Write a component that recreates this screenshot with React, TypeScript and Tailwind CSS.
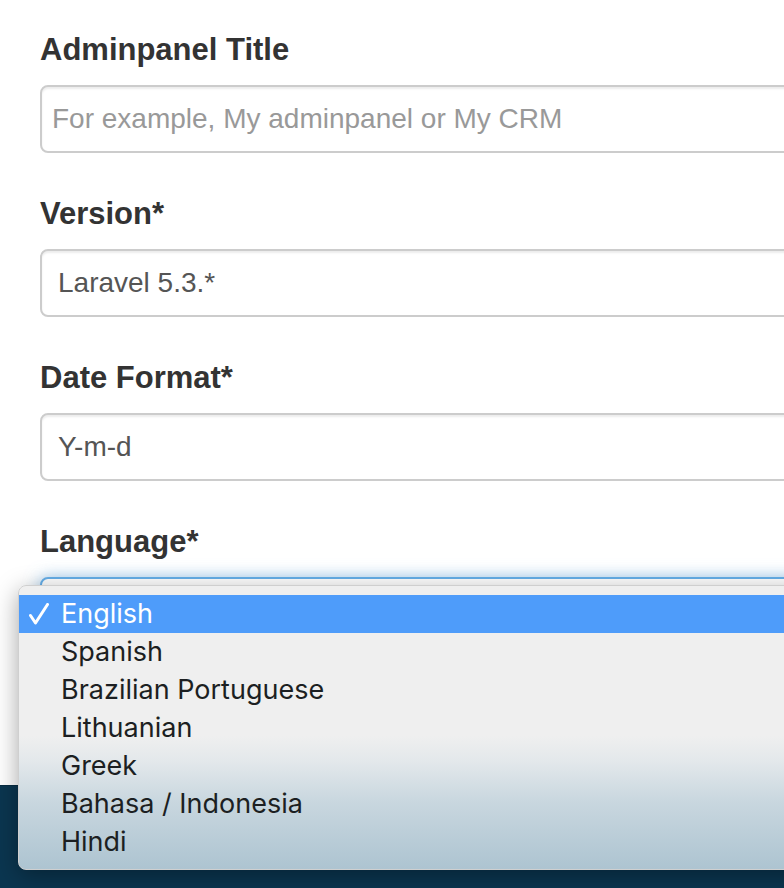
import { useState } from 'react'

const languages = ['English', 'Spanish', 'Brazilian Portuguese', 'Lithuanian', 'Greek', 'Bahasa / Indonesia', 'Hindi']

const labelCls = 'block text-[31px] leading-[40px] font-bold text-[#333]'
const fieldCls = 'flex items-center h-[68px] w-[900px] rounded-[8px] border-2 bg-white text-[28px]'

function Field({ label, children, focused }: { label?: string; children?: React.ReactNode; focused?: boolean }) {
  return (
    <div className="mb-[41px]">
      <label className={labelCls}>{label}</label>
      <div
        className={`mt-[15px] ${fieldCls} ${focused
          ? 'border-[#66afe9] shadow-[0_0_16px_rgba(102,175,233,0.6)]'
          : 'border-[#ccc] shadow-[inset_0_2px_2px_rgba(0,0,0,0.075)]'}`}
      >
        {children}
      </div>
    </div>
  )
}

export default function App() {
  const [selected] = useState('English')

  return (
    <div
      className="relative w-[784px] h-[888px] overflow-hidden bg-white flex flex-col"
      style={{ fontFamily: '"Liberation Sans", Arial, sans-serif' }}
    >
      <div className="flex-1 pt-[30px] pl-[40px]">
        <Field label="Adminpanel Title">
          <span className="pl-[10px] text-[#999]">For example, My adminpanel or My CRM</span>
        </Field>
        <Field label="Version*">
          <span className="pl-[16px] text-[#555]">Laravel 5.3.*</span>
        </Field>
        <Field label="Date Format*">
          <span className="pl-[16px] text-[#555]">Y-m-d</span>
        </Field>
        {/* value is covered by the open menu */}
        <Field label="Language*" focused />
      </div>

      {/* footer band behind the open menu */}
      <div className="h-[103px] bg-[#0b3650] border-t border-[#082c42]" />

      {/* native select menu */}
      <div
        className="absolute left-[18px] top-[585px] w-[820px] rounded-[8px] pt-[9px] pb-[8px] shadow-[0_6px_24px_rgba(0,0,0,0.35)] border border-[#cfcfcf] bg-[linear-gradient(to_bottom,#efefef_0%,#efefef_53%,#e3e8eb_62%,#c9d7df_76%,#adc4d1_100%)]"
        style={{ fontFamily: 'Inter, "Noto Sans", sans-serif' }}
      >
        {languages.map(lang => {
          const active = lang === selected
          return (
            <div
              key={lang}
              className={`flex items-center h-[38px] text-[27px] ${active ? 'bg-[#4e9cfa] text-white' : 'text-[#1c1f22]'}`}
            >
              <span className="w-[42px] pl-[10px] flex items-center">
                {active && (
                  <svg width="20" height="22" viewBox="0 0 20 22" fill="none">
                    <path d="M1.5 12.5 L6.5 20 L18.5 1.5" stroke="white" strokeWidth="3" strokeLinecap="round" strokeLinejoin="round" />
                  </svg>
                )}
              </span>
              <span>{lang}</span>
            </div>
          )
        })}
      </div>
    </div>
  )
}
